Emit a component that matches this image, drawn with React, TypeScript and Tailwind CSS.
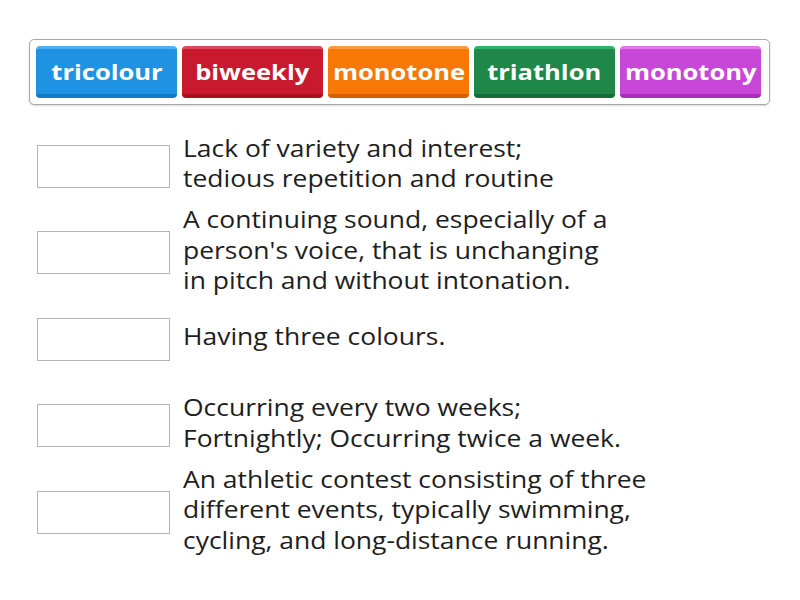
import React from "react";

const tiles = [
  { t: "tricolour", c: "bg-[#1f92e3] border-t-[#4db0f2] border-b-[#1479c4]" },
  { t: "biweekly", c: "bg-[#c8192f] border-t-[#db4a5d] border-b-[#a8101f]" },
  { t: "monotone", c: "bg-[#f77707] border-t-[#fb9a40] border-b-[#d85f00]" },
  { t: "triathlon", c: "bg-[#1f8748] border-t-[#2fb463] border-b-[#186c39]" },
  { t: "monotony", c: "bg-[#c947d8] border-t-[#de7be8] border-b-[#a92fba]" },
];

const rows: string[][] = [
  ["Lack of variety and interest;", "tedious repetition and routine"],
  ["A continuing sound, especially of a", "person's voice, that is unchanging", "in pitch and without intonation."],
  ["Having three colours."],
  ["Occurring every two weeks;", "Fortnightly; Occurring twice a week."],
  ["An athletic contest consisting of three", "different events, typically swimming,", "cycling, and long-distance running."],
];

export default function App() {
  return (
    <div className="w-[800px] h-[600px] bg-white font-['Open_Sans',sans-serif] relative overflow-hidden">
      <div className="pt-[39px] pl-[29px]">
        <div className="w-[741px] h-[66px] border border-[#a8a8a8] rounded-[5px] px-[6px] py-[6px] flex gap-[5px] shadow-[0_1px_2px_rgba(0,0,0,0.15)]">
          {tiles.map((x) => (
            <div
              key={x.t}
              className={`w-[141px] h-[52px] rounded-[4px] border-t-[3px] border-b-[4px] border-x-0 ${x.c} flex items-center justify-center text-white font-bold text-[22px] leading-none`}
            >
              <span className="inline-block scale-x-[1.16] pb-[1px]">{x.t}</span>
            </div>
          ))}
        </div>
      </div>
      <div className="mt-[18px] pl-[37px] flex flex-col">
        {rows.map((lines, i) => (
          <div key={i} className="h-[86.5px] flex items-center gap-[13px]">
            <div className="w-[133px] h-[43px] border border-[#b4b4b4] bg-white shrink-0" />
            <div className="text-[23px] leading-[30.5px] text-[#1e1e1e] whitespace-nowrap origin-left scale-x-[1.15] pb-[6px]">
              {lines.map((l, j) => (
                <div key={j}>{l}</div>
              ))}
            </div>
          </div>
        ))}
      </div>
    </div>
  );
}
